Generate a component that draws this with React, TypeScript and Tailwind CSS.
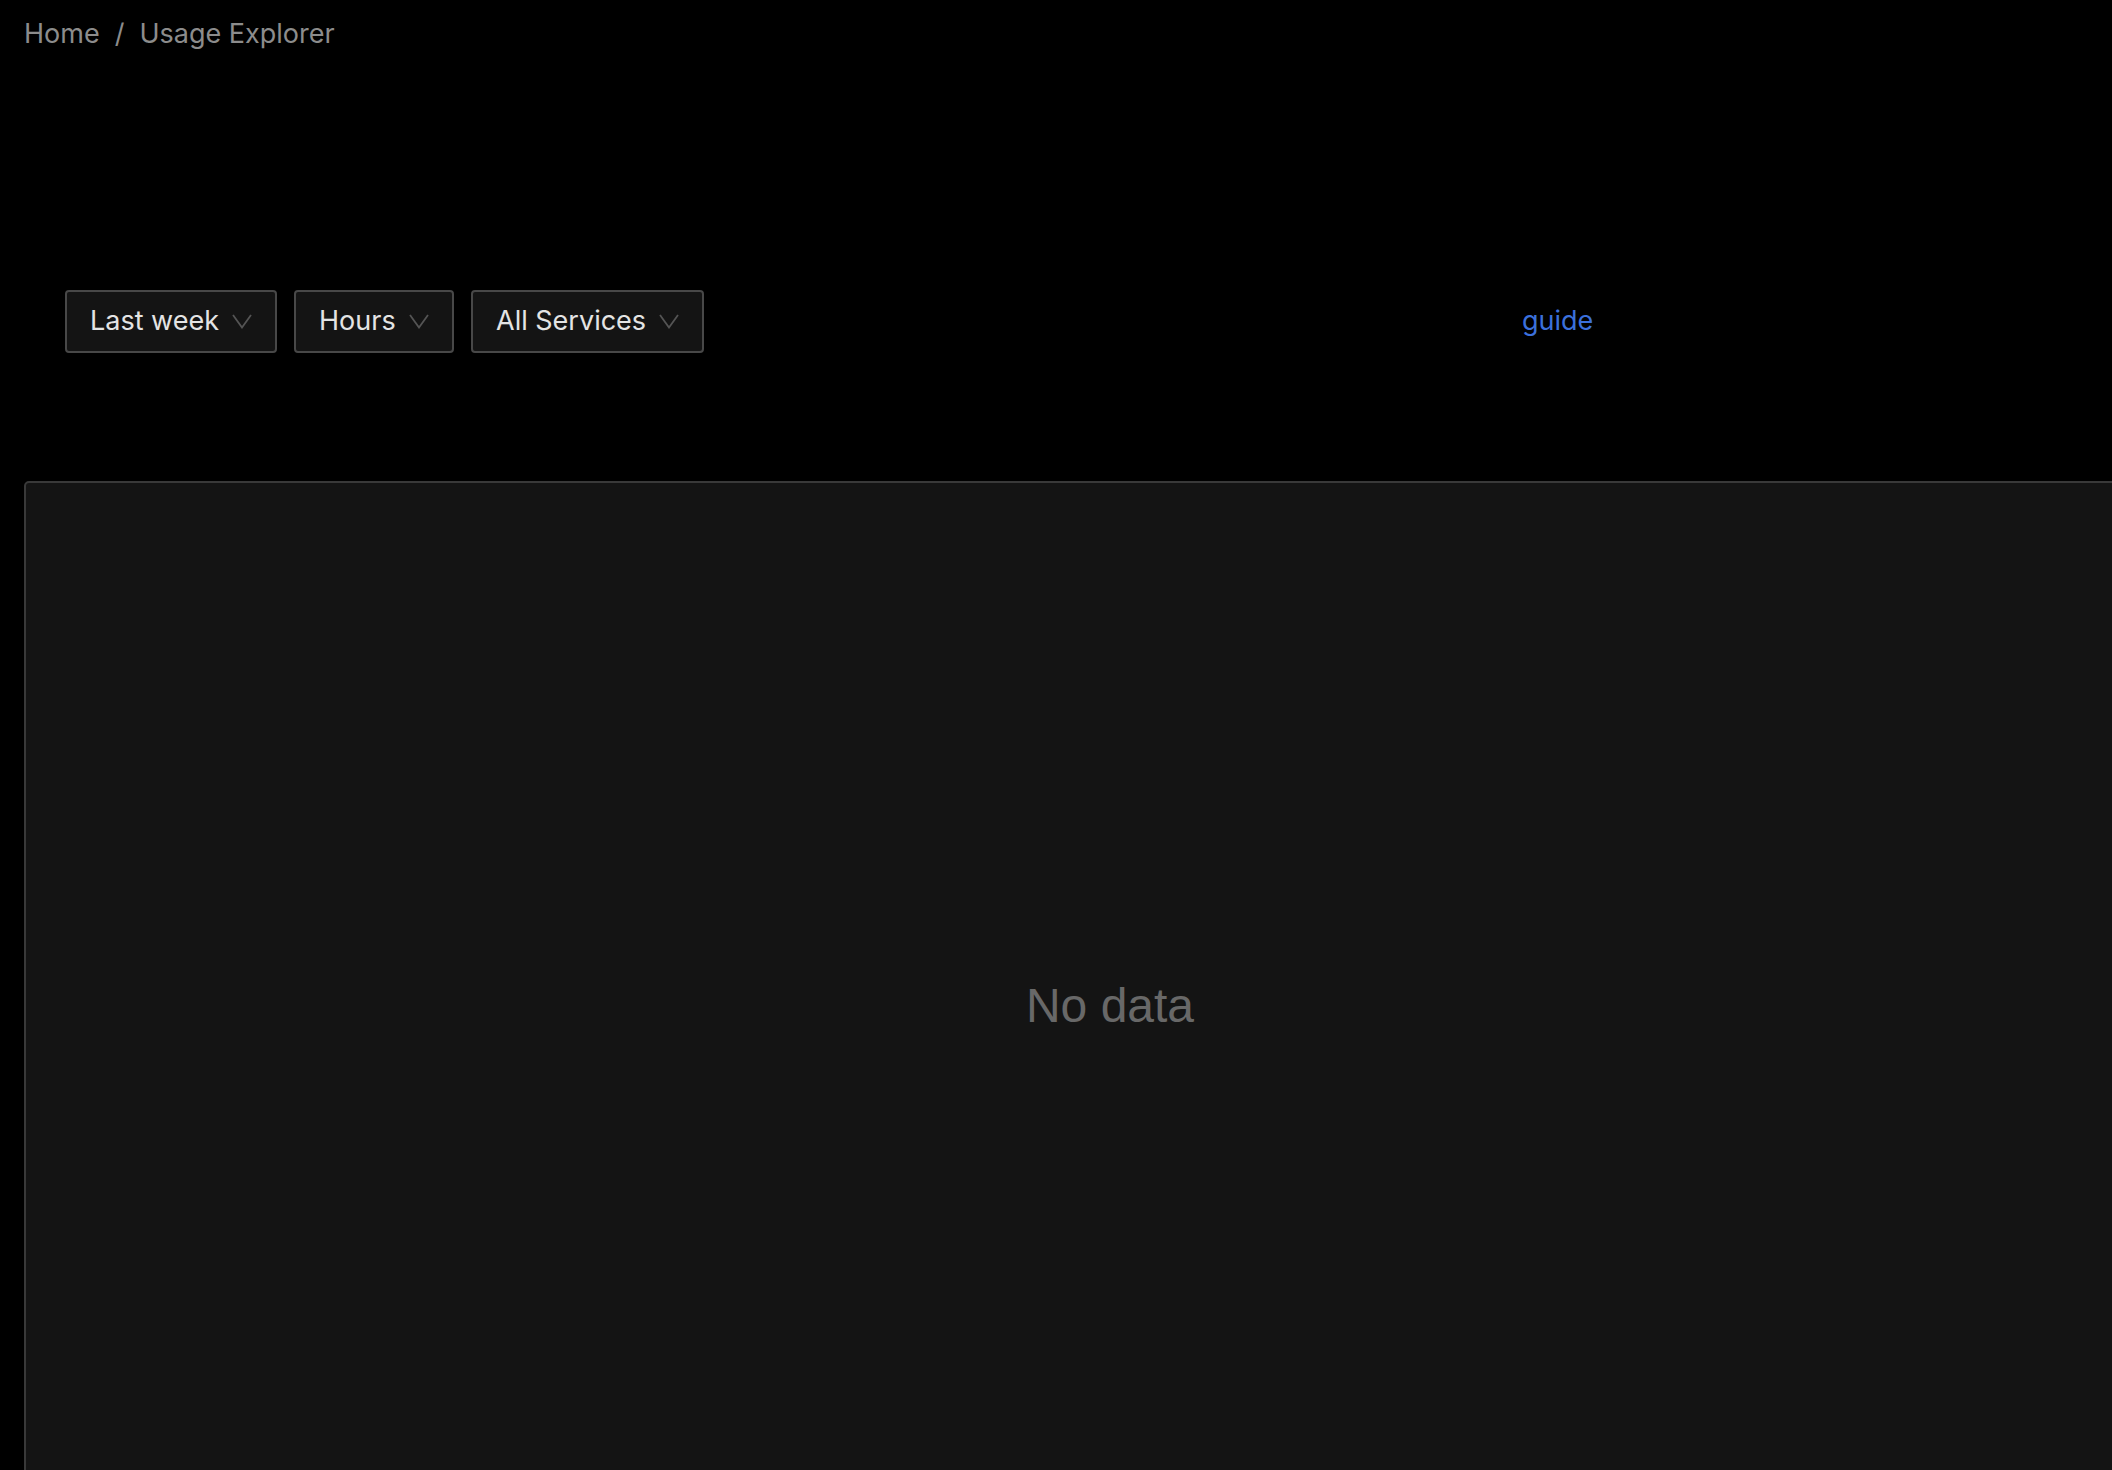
import React from 'react';

const FILTERS = [
  { id: 'range', label: 'Last week', width: 'w-[212px]' },
  { id: 'unit', label: 'Hours', width: 'w-[160px]' },
  { id: 'service', label: 'All Services', width: 'w-[233px]' },
] as const;

const Chevron: React.FC = () => (
  <svg width="20" height="15" viewBox="0 0 20 15" fill="none" className="shrink-0">
    <path d="M1 1 L10 13.5 L19 1" stroke="#545454" strokeWidth="1.8" />
  </svg>
);

const App: React.FC = () => (
  <div className="w-full h-[1470px] overflow-hidden bg-black font-['Inter','Noto_Sans',sans-serif]">
    <nav className="pl-[24px] pt-[13px] flex items-center text-[27px] leading-[42px] text-[#8c8c8c]">
      <span>Home</span>
      <span className="mx-[15px]">/</span>
      <span>Usage Explorer</span>
    </nav>

    <div className="mt-[235px] pl-[65px] flex items-center">
      <div className="flex items-center gap-[17px]">
        {FILTERS.map(f => (
          <button
            key={f.id}
            className={`${f.width} h-[63px] flex items-center justify-between pl-[23px] pr-[23px] bg-[#141414] border-2 border-[#484848] rounded-[4px] text-[27px] text-[#e4e4e4]`}
          >
            <span>{f.label}</span>
            <Chevron />
          </button>
        ))}
      </div>
      <a className="ml-[818px] text-[27px] text-[#3b70dc]">guide</a>
    </div>

    <div className="mt-[128px] ml-[24px] w-[2172px] h-[1050px] bg-[#141414] border-2 border-[#393939] rounded-[5px] flex items-center justify-center">
      <span className="font-['Liberation_Sans',Arial,sans-serif] text-[48px] text-[#686868]">No data</span>
    </div>
  </div>
);

export default App;
